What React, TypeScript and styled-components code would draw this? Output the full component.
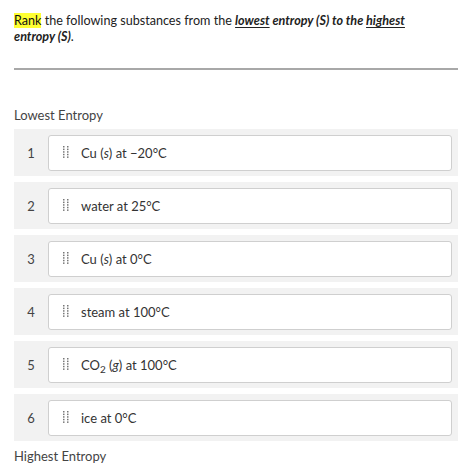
import React from 'react';
import styled, { createGlobalStyle } from 'styled-components';

const GlobalStyle = createGlobalStyle`
  body {
    margin: 0;
    background: #fff;
    font-family: Lato, 'Liberation Sans', sans-serif;
    color: #222;
  }
`;

const Page = styled.div`
  width: 459px;
  padding: 13px 1px 0 14px;
  box-sizing: border-box;
`;

const Prompt = styled.p`
  margin: 0;
  font-size: 12.6px;
  line-height: 16px;
  color: #222;
  padding-right: 40px;
  mark {
    background: #ffff33;
    color: #111;
    padding: 0;
  }
  em {
    font-weight: bold;
  }
  u {
    text-underline-offset: 2px;
  }
`;

const Rule = styled.hr`
  margin: 23px 0 0 0;
  border: none;
  height: 2px;
  background: #a8a8a8;
`;

const EndLabel = styled.div<{ $top: number }>`
  margin-top: ${p => p.$top}px;
  font-size: 13px;
  line-height: 16px;
  color: #444;
`;

const List = styled.ol`
  list-style: none;
  margin: 6px 0 0 0;
  padding: 0;
  display: flex;
  flex-direction: column;
  gap: 6px;
`;

const Row = styled.li`
  display: flex;
  align-items: center;
  height: 47px;
  padding: 0 6px 0 0;
  box-sizing: border-box;
  background: #f2f2f2;
`;

const Num = styled.span`
  width: 34px;
  text-align: center;
  font-size: 13px;
  color: #444;
`;

const Card = styled.div`
  flex: 1;
  height: 36px;
  display: flex;
  align-items: center;
  gap: 12px;
  padding-left: 14px;
  box-sizing: border-box;
  background: #fff;
  border: 1px solid #cfcfcf;
  border-radius: 3px;
  font-size: 13px;
  color: #333;
  i {
    font-style: italic;
  }
  sub {
    font-size: 10px;
    vertical-align: -3px;
    line-height: 0;
  }
`;

const Handle = () => (
  <svg width="6" height="13" viewBox="0 0 6 13">
    {[0, 1, 2, 3, 4].map(r =>
      [0, 1].map(c => (
        <rect key={`${r}-${c}`} x={c * 4} y={r * 2.6} width="1.5" height="1.5" fill="#777" />
      ))
    )}
  </svg>
);

const items: React.ReactNode[] = [
  <>Cu (<i>s</i>) at −20°C</>,
  <>water at 25°C</>,
  <>Cu (<i>s</i>) at 0°C</>,
  <>steam at 100°C</>,
  <>CO<sub>2</sub> (<i>g</i>) at 100°C</>,
  <>ice at 0°C</>,
];

const App = () => (
  <Page>
    <GlobalStyle />
    <Prompt>
      <mark>Rank</mark> the following substances from the{' '}
      <em>
        <u>lowest</u> entropy (S) to the <u>highest</u> entropy (S)
      </em>
      .
    </Prompt>
    <Rule />
    <EndLabel $top={37}>Lowest Entropy</EndLabel>
    <List>
      {items.map((it, i) => (
        <Row key={i}>
          <Num>{i + 1}</Num>
          <Card>
            <Handle />
            <span>{it}</span>
          </Card>
        </Row>
      ))}
    </List>
    <EndLabel $top={7}>Highest Entropy</EndLabel>
  </Page>
);

export default App;
